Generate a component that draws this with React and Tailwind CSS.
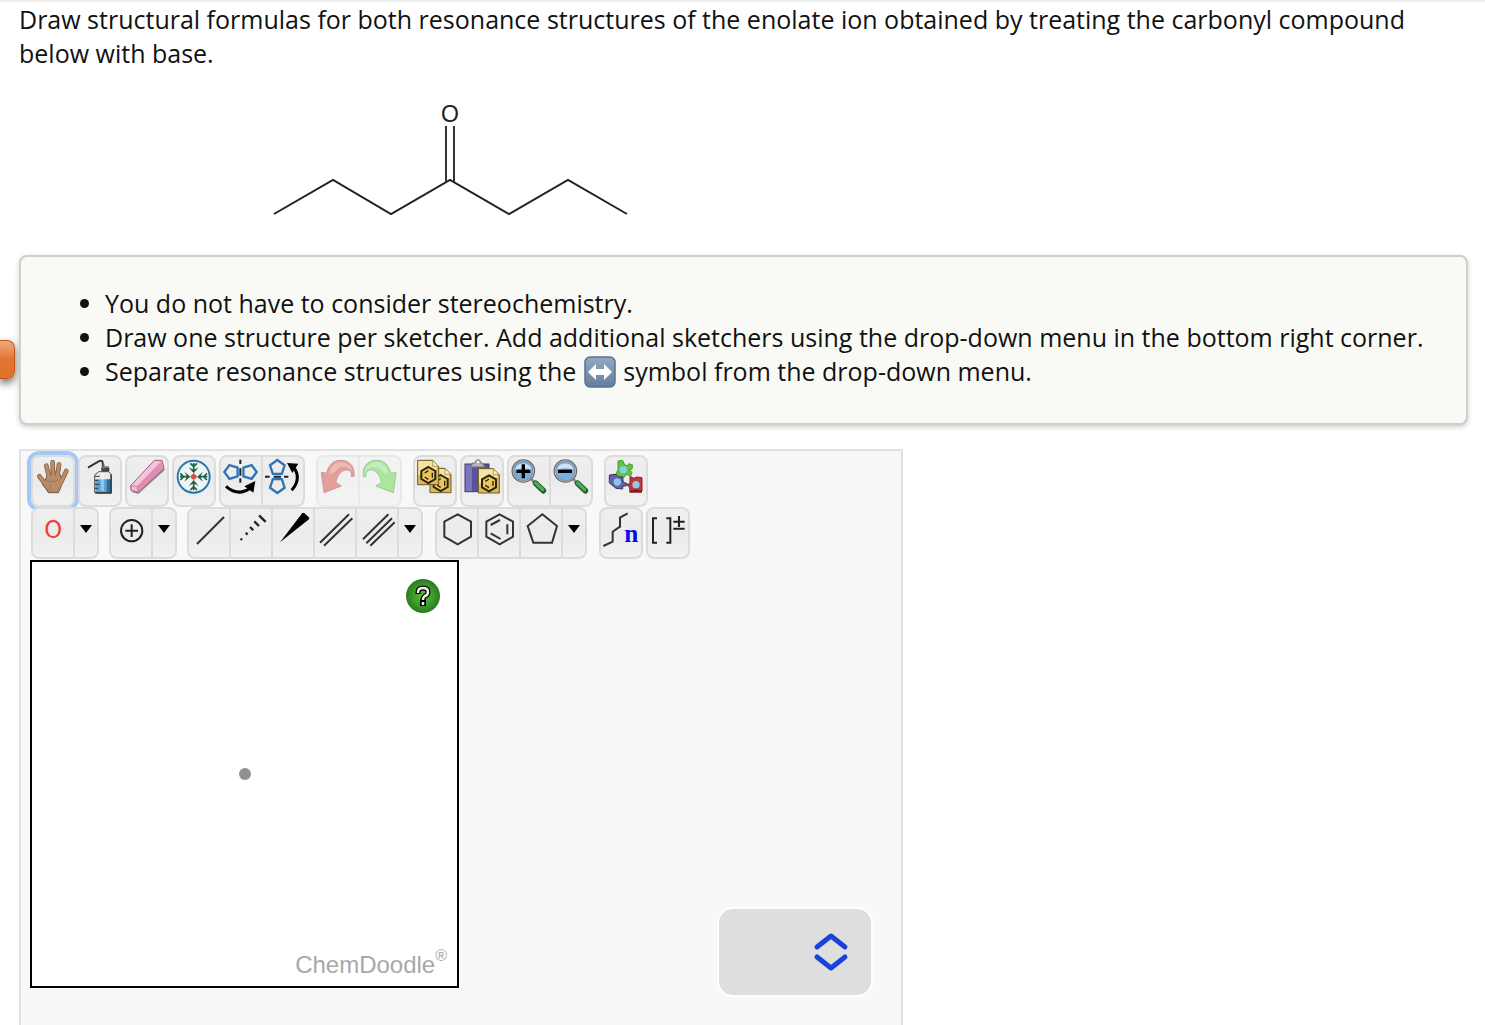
const pentagon = (cx, cy, r, turn) =>
  [0, 1, 2, 3, 4]
    .map(i => {
      const a = ((turn + i * 72) * Math.PI) / 180;
      return `${cx + r * Math.sin(a)},${cy - r * Math.cos(a)}`;
    })
    .join(' ');

function Icon({ children }) {
  return (
    <svg viewBox="0 0 108 108" className="w-9 h-9 shrink-0 overflow-visible" fill="none" aria-hidden="true">
      {children}
    </svg>
  );
}

/* ═══ TOP ROW ICONS ═══ */
function HandIcon() {
  const fingers = 'M13 52 L38 84 M34 20 L44 62 M53 10 L54 62 M72 17 L66 62 M94 36 L76 74';
  return (
    <Icon>
      <path d={fingers} stroke="#7a563d" strokeWidth="14" strokeLinecap="round" />
      <path d="M30 66 L38 44 H74 L82 66 Q80 84 70 101 H40 Q34 90 22 76 Z" fill="#a87a56" stroke="#7a563d" strokeWidth="3" />
      <path d={fingers} stroke="#b98c68" strokeWidth="10" strokeLinecap="round" />
      <path d="M36 50 H74 L79 74 Q76 86 68 98 H43 Q38 86 32 76 Z" fill="#b98c68" />
      <path d="M38 66 Q54 72 72 62 M42 72 Q50 84 46 94 M49 34 V52 M61 34 V52" stroke="#96704f" strokeWidth="2.5" />
    </Icon>
  );
}

function PumpIcon() {
  return (
    <Icon>
      <path d="M18 26 L50 7 Q62 2 62 12 L64 28" stroke="#333" strokeWidth="6" />
      <rect x="58" y="25" width="24" height="14" rx="3" fill="#444" />
      <path d="M58 24 H81 M66 16 V30" stroke="#777" strokeWidth="4" />
      <path d="M38 48 L50 38 H80 L88 46 V101 H38 Z" fill="#e6eaec" stroke="#555" strokeWidth="3" />
      <path d="M40 61 H87 V100 H40 Z" fill="#5aa3da" />
      <path d="M74 61 H87 V100 H74 Z" fill="#2d6da1" />
      <path d="M56 42 H66 V96 H56 Z" fill="#fff" opacity=".35" />
      <path d="M39 52 H53 M39 64 H49 M39 76 H53 M39 88 H49" stroke="#333" strokeWidth="3" />
      <path d="M87 46 V102 H40" stroke="#333" strokeWidth="4" />
    </Icon>
  );
}

function EraserIcon() {
  return (
    <Icon>
      <path d="M8 99 L28 105 L107 34 L104 22 Z" fill="#444" opacity=".55" />
      <path d="M5 80 L76 4 L99 4 L105 28 L26 101 L6 94 Z" fill="#f0a9cb" stroke="#a9597f" strokeWidth="3" strokeLinejoin="round" />
      <path d="M22 84 L96 9 L103 28 L27 99 Z" fill="#dd8eb5" />
      <path d="M8 79 L77 7 L94 8 L24 80 Z" fill="#f7c4dc" />
      <path d="M6 81 L24 82 L27 99 L8 93 Z" fill="#f7bdd6" stroke="#b9708f" strokeWidth="2" />
    </Icon>
  );
}

function CenterIcon() {
  return (
    <Icon>
      <circle cx="53" cy="53" r="48" fill="#eef5f5" stroke="#2b74aa" strokeWidth="6" />
      {[0, 90, 180, 270].map(a => (
        <g key={a} transform={`rotate(${a} 53 53)`}>
          <path d="M53 12 V34 M43 13 L53 23 L63 13" stroke="#245f43" strokeWidth="5" />
          <path d="M38 25 L53 43 L68 25 L57 31 H49 Z" fill="#245f43" />
        </g>
      ))}
      <path d="M53 39 V67 M39 53 H67" stroke="#6b8f78" strokeWidth="3" />
      <circle cx="53" cy="53" r="8" fill="#d64b45" />
    </Icon>
  );
}

function FlipHorizontalIcon() {
  return (
    <Icon>
      <polygon points={pentagon(26, 39, 22, -90)} stroke="#2f75b5" strokeWidth="7" />
      <polygon points={pentagon(79, 39, 22, 90)} stroke="#2f75b5" strokeWidth="7" />
      <path d="M52 2 V15 M52 28 V50 M52 58 V71" stroke="#222" strokeWidth="6" />
      <path d="M9 82 Q46 114 82 87" stroke="#000" strokeWidth="9" />
      <path d="M64 82 L97 66 L91 101 Z" fill="#000" />
    </Icon>
  );
}

function FlipVerticalIcon() {
  return (
    <Icon>
      <polygon points={pentagon(37, 26, 23, 0)} stroke="#2f75b5" strokeWidth="7" />
      <polygon points={pentagon(37, 79, 23, 180)} stroke="#2f75b5" strokeWidth="7" />
      <path d="M0 53 H14 M26 53 H48 M57 53 H70" stroke="#222" strokeWidth="6" />
      <path d="M80 94 Q110 60 87 26" stroke="#000" strokeWidth="9" />
      <path d="M66 12 L100 14 L82 42 Z" fill="#000" />
    </Icon>
  );
}

const TURN_ARROW =
  'M102 53 C106 15 80 -1 50 5 C34 10 24 24 20 43 L4 40 L12 101 L64 81 L48 71 C50 54 60 36 76 33 C90 31 96 40 94 52 Z';
const TURN_SHINE = 'M98 40 C94 14 70 6 52 11 C38 16 30 28 27 46 L44 40 C54 22 78 14 98 40 Z';

function UndoIcon() {
  return (
    <Icon>
      <path d={TURN_ARROW} fill="#d3483f" stroke="#8f433d" strokeWidth="3" strokeLinejoin="round" />
      <path d={TURN_SHINE} fill="#fff" opacity=".3" />
    </Icon>
  );
}

function RedoIcon() {
  return (
    <Icon>
      <g transform="matrix(-1 0 0 1 106 0)">
        <path d={TURN_ARROW} fill="#5fd845" stroke="#489440" strokeWidth="3" strokeLinejoin="round" />
        <path d={TURN_SHINE} fill="#fff" opacity=".3" />
      </g>
    </Icon>
  );
}

function MoleculePage({ x, y }) {
  return (
    <g transform={`translate(${x} ${y})`}>
      <path d="M1 1 H46 L64 20 V74 H1 Z" fill="#dfb957" stroke="#6d5a26" strokeWidth="3" />
      <path d="M3 3 H45 L58 22 V30 L3 46 Z" fill="#f7e3a0" />
      <path d="M46 1 V19 H64 Z" fill="#fbf0c8" stroke="#8b7537" strokeWidth="2" />
      <path d="M33 21 L54 33 V57 L33 69 L12 57 V33 Z" fill="#e9c65d" stroke="#292310" strokeWidth="6" />
      <path d="M22 39 L33 32 M45 38 V53 M22 51 L33 58" stroke="#292310" strokeWidth="4" />
    </g>
  );
}

function CopyIcon() {
  return (
    <Icon>
      <MoleculePage x={38} y={27} />
      <MoleculePage x={1} y={3} />
    </Icon>
  );
}

function PasteIcon() {
  return (
    <Icon>
      <rect x="3" y="15" width="72" height="83" fill="#5b529d" stroke="#3d3875" strokeWidth="3" />
      <path d="M5 17 H24 V96 H5 Z" fill="#7d75bd" />
      <path d="M20 24 L26 12 H34 Q34 2 42 2 Q50 2 50 12 H56 L62 24 Z" fill="#b5b5b5" stroke="#777" strokeWidth="3" />
      <circle cx="42" cy="9" r="4" fill="#f3f3f3" />
      <MoleculePage x={42} y={28} />
    </Icon>
  );
}

function ZoomIcon({ plus }) {
  return (
    <Icon>
      <path d="M60 60 L76 75" stroke="#8a8a8a" strokeWidth="9" />
      <path d="M74 73 L97 95" stroke="#1d6427" strokeWidth="17" strokeLinecap="round" />
      <path d="M74 72 L95 92" stroke="#4fab54" strokeWidth="10" strokeLinecap="round" />
      <circle cx="37" cy="36" r="32" fill="#79aee0" stroke="#666" strokeWidth="7" />
      <circle cx="37" cy="36" r="31" stroke="#b9bcc0" strokeWidth="3" />
      <path d="M12 32 A26 26 0 0 1 62 32 Q38 24 12 32 Z" fill="#cfe3f5" />
      <path d={plus ? 'M16 37 H58 M37 16 V58' : 'M15 37 H57'} stroke="#000" strokeWidth="10" />
    </Icon>
  );
}

function BlocksIcon() {
  return (
    <Icon>
      <path d="M30 6 L44 4 L50 18 L60 20 L62 14 L74 18 L72 30 L64 32 L72 40 L68 50 L54 46 L48 56 L22 48 L30 32 Z" fill="#5bc83c" stroke="#4a9a38" strokeWidth="3" />
      <path d="M4 48 L24 46 L30 54 L44 54 L46 70 L58 74 L56 80 L44 82 L44 90 L24 88 L4 72 Z" fill="#6661aa" stroke="#3b356e" strokeWidth="3" />
      <path d="M66 52 L78 58 L86 54 L102 56 L102 96 L84 92 L66 96 L64 84 L58 78 L66 72 Z" fill="#c4343a" stroke="#8d2327" strokeWidth="3" />
      <path d="M64 96 L84 92 L102 96 V101 H64 Z" fill="#7d1b1e" />
      <circle cx="46" cy="32" r="11" fill="#83cfe4" />
      <circle cx="28" cy="69" r="11" fill="#8cc4ea" />
      <circle cx="84" cy="77" r="11" fill="#8dcbe8" />
    </Icon>
  );
}

/* ═══ BOTTOM ROW ICONS ═══ */
function OxygenIcon() {
  return (
    <Icon>
      <text x="55" y="82" textAnchor="middle" fontSize="76" fill="#f23c36" fontFamily="'DejaVu Sans Condensed', 'DejaVu Sans', sans-serif">O</text>
    </Icon>
  );
}

function ChargeIcon() {
  return (
    <Icon>
      <circle cx="56" cy="59" r="32" stroke="#222" strokeWidth="6" />
      <path d="M37 59 H75 M56 40 V78" stroke="#222" strokeWidth="6" />
    </Icon>
  );
}

function LinesIcon({ d }) {
  return (
    <Icon>
      <path d={d} stroke="#333" strokeWidth="6" />
    </Icon>
  );
}

function RecessedBondIcon() {
  const marks = [[25, 85, 3], [41, 68, 4], [56, 53, 7], [71, 38, 10], [88, 23, 14]];
  return (
    <Icon>
      {marks.map(([x, y, r]) => (
        <path key={x} d={`M${x - r * 0.7} ${y - r * 0.7} L${x + r * 0.7} ${y + r * 0.7}`} stroke="#222" strokeWidth="7" />
      ))}
    </Icon>
  );
}

function WedgeIcon() {
  return (
    <Icon>
      <path d="M15 94 L82 6 L88 6 L103 20 L102 25 Z" fill="#000" />
    </Icon>
  );
}

function ChainIcon() {
  return (
    <Icon>
      <path d="M1 105 L29 92 V62 L51 47 V20 L74 7" stroke="#333" strokeWidth="6" />
      <text x="64" y="94" fontSize="76" fontWeight="bold" fill="#0a0af0" fontFamily="'Liberation Serif', serif">n</text>
    </Icon>
  );
}

function BracketIcon() {
  return (
    <Icon>
      <path d="M21 22 H9 V95 H21 M49 22 H61 V95 H49" stroke="#222" strokeWidth="6" />
      <path d="M70 32 H104 M87 15 V48 M70 53 H104" stroke="#222" strokeWidth="6" />
    </Icon>
  );
}

const topRow = [
  { gap: '', tools: [{ label: 'Move', icon: <HandIcon />, active: true }] },
  { gap: 'ml-[3px]', tools: [{ label: 'Clear', icon: <PumpIcon /> }] },
  { gap: 'ml-[3px]', tools: [{ label: 'Erase', icon: <EraserIcon /> }] },
  { gap: 'ml-[3px]', tools: [{ label: 'Center', icon: <CenterIcon /> }] },
  { gap: 'ml-[3px]', tools: [{ label: 'Flip horizontally', icon: <FlipHorizontalIcon /> }, { label: 'Flip vertically', icon: <FlipVerticalIcon /> }] },
  { gap: 'ml-[11px]', faded: true, tools: [{ label: 'Undo', icon: <UndoIcon /> }, { label: 'Redo', icon: <RedoIcon /> }] },
  { gap: 'ml-[11px]', tools: [{ label: 'Copy', icon: <CopyIcon /> }] },
  { gap: 'ml-[3px]', tools: [{ label: 'Paste', icon: <PasteIcon /> }] },
  { gap: 'ml-[3px]', tools: [{ label: 'Zoom in', icon: <ZoomIcon plus /> }, { label: 'Zoom out', icon: <ZoomIcon /> }] },
  { gap: 'ml-[11px]', tools: [{ label: 'Clean', icon: <BlocksIcon /> }] },
];

const bottomRow = [
  { gap: '', menu: 'More elements', tools: [{ label: 'Oxygen', icon: <OxygenIcon /> }] },
  { gap: 'ml-2.5', menu: 'More attributes', tools: [{ label: 'Increase charge', icon: <ChargeIcon /> }] },
  {
    gap: 'ml-2.5',
    menu: 'More bonds',
    tools: [
      { label: 'Single bond', icon: <LinesIcon d="M18 99 L99 18" /> },
      { label: 'Recessed bond', icon: <RecessedBondIcon /> },
      { label: 'Protruding bond', icon: <WedgeIcon /> },
      { label: 'Double bond', icon: <LinesIcon d="M9 95 L96 10 M21 104 L106 22" /> },
      { label: 'Triple bond', icon: <LinesIcon d="M12 85 L88 10 M22 97 L99 22 M34 104 L107 34" /> },
    ],
  },
  {
    gap: 'ml-3',
    menu: 'More rings',
    tools: [
      { label: 'Cyclohexane', icon: <LinesIcon d="M56 10 L96 32 V77 L56 100 L16 77 V32 Z" /> },
      { label: 'Benzene', icon: <LinesIcon d="M56 10 L96 32 V77 L56 100 L16 77 V32 Z M29 42 L57 27 M79 40 V70 M29 67 L59 84" /> },
      { label: 'Cyclopentane', icon: <LinesIcon d="M58 10 L102 45 L87 95 H31 L14 45 Z" /> },
    ],
  },
  { gap: 'ml-3', tools: [{ label: 'Carbon chain', icon: <ChainIcon /> }] },
  { gap: 'ml-[3px]', tools: [{ label: 'Repeat unit', icon: <BracketIcon /> }] },
];

function ToolGroup({ group }) {
  const active = group.tools[0].active;
  return (
    <div
      className={`flex h-[52px] shrink-0 rounded-lg border-2 border-[#dcdcdc] bg-linear-to-b from-[#efefef] via-[#ebebeb] to-[#f2f2f2] ${group.gap} ${
        group.faded ? 'opacity-50' : ''
      } ${active ? 'ring-4 ring-[#a3c8f8]' : ''}`}
    >
      {group.tools.map((t, i) => (
        <button
          key={t.label}
          aria-label={t.label}
          disabled={group.faded}
          className={`flex items-start justify-center pt-0.5 ${i > 0 ? 'w-[42px] border-l-2 border-[#dcdcdc]' : 'w-10'}`}
        >
          {t.icon}
        </button>
      ))}
      {group.menu && (
        <button aria-label={group.menu} className="w-6 border-l-2 border-[#dcdcdc] flex justify-center items-start pt-4">
          <svg viewBox="0 0 12 8" className="w-3 h-2" aria-hidden="true">
            <path d="M0 0 H12 L6 8 Z" fill="#000" />
          </svg>
        </button>
      )}
    </div>
  );
}

function Heptanone() {
  return (
    <svg viewBox="0 0 360 116" className="w-[360px] h-[116px] shrink-0 ml-[252px] mt-8" fill="none" role="img" aria-label="4-heptanone">
      <path d="M3 112 L62 78 L120 112 L179 78 L238 112 L297 78 L356 112" stroke="#222" strokeWidth="2" />
      <path d="M175 24 V80 M183 24 V80" stroke="#333" strokeWidth="2" />
      <text x="179" y="20" textAnchor="middle" fontSize="23" fill="#222" fontFamily="'Liberation Sans', Arial, sans-serif">O</text>
    </svg>
  );
}

function ArrowEmoji() {
  return (
    <svg viewBox="0 0 32 32" className="inline-block w-8 h-8 mx-px -mt-1 align-middle" role="img" aria-label="left right arrow">
      <defs>
        <linearGradient id="emoji" x1="0" y1="0" x2="0" y2="1">
          <stop offset="0" stopColor="#92a9c2" />
          <stop offset="1" stopColor="#627e9e" />
        </linearGradient>
      </defs>
      <rect x="1" y="1" width="30" height="30" rx="5" fill="url(#emoji)" stroke="#58718e" strokeWidth="1.5" />
      <path d="M4 16 L12 8 V13 H20 V8 L28 16 L20 24 V19 H12 V24 Z" fill="#fff" />
    </svg>
  );
}

function Sketcher() {
  return (
    <div className="w-[429px] h-[428px] shrink-0 border-2 border-black bg-white flex flex-col justify-between pt-[17px] pb-1">
      <button aria-label="Help" className="self-end mr-[17px] w-[34px] h-[34px]">
        <svg viewBox="0 0 34 34" aria-hidden="true">
          <defs>
            <radialGradient id="help">
              <stop offset="0" stopColor="#56c936" />
              <stop offset="1" stopColor="#2b7a22" />
            </radialGradient>
          </defs>
          <circle cx="17" cy="17" r="17" fill="url(#help)" />
          <path d="M12 15 V13 Q12 9 17 9 Q22 9 22 13 Q22 16 19 17 Q17 18 17 21" stroke="#000" strokeWidth="5" fill="none" />
          <path d="M14 20 H20 V27 H14 Z" fill="#000" />
          <path d="M12 14 V13 Q12 9 17 9 Q22 9 22 13 Q22 16 19 17 Q17 18 17 21 M17 23 V26" stroke="#f0f0f0" strokeWidth="2.5" fill="none" />
        </svg>
      </button>
      <div className="self-center w-3 h-3 rounded-full bg-[#909090]" />
      <div className="self-end mr-2.5 pt-2 h-12 flex items-start text-[#a8a8a8] font-['Liberation_Sans',Arial,sans-serif]">
        <span className="text-[24px] leading-[46px]">ChemDoodle</span>
        <span className="text-base leading-7">®</span>
      </div>
    </div>
  );
}

export default function App() {
  return (
    <div className="relative h-screen overflow-hidden flex flex-col bg-white border-t-2 border-[#ececec] pl-[19px] pr-[17px] text-[#111] text-[25px] leading-[34px] font-['Open_Sans',sans-serif]">
      <p>
        Draw structural formulas for both resonance structures of the enolate ion obtained by treating the carbonyl compound below with base.
      </p>

      <Heptanone />

      {/* Side tab */}
      <div className="absolute left-0 top-[338px] w-[15px] h-[39px] rounded-r-lg border border-l-0 border-[#c9541d] bg-linear-to-b from-[#eeaa78] via-[#df7530] to-[#e0722a] shadow-[0_4px_8px_rgba(0,0,0,0.6)]" />

      {/* Instructions */}
      <div className="relative mt-[37px] shrink-0 rounded-lg border-2 border-[#cfcfcc] bg-[#f9faf5] pt-[29px] pb-[35px] pl-[84px] shadow-[0_2px_5px_rgba(0,0,0,0.2)]">
        <ul className="list-disc">
          <li>You do not have to consider stereochemistry.</li>
          <li>Draw one structure per sketcher. Add additional sketchers using the drop-down menu in the bottom right corner.</li>
          <li className="h-[34px]">
            Separate resonance structures using the <ArrowEmoji /> symbol from the drop-down menu.
          </li>
        </ul>
      </div>

      {/* Sketcher panel */}
      <div className="mt-6 grow shrink-0 w-full max-w-[884px] border-2 border-b-0 border-[#e2e2e2] bg-[#f8f8f8] pt-1 pl-[9px] pr-7">
        <div className="pl-px">
          <div className="flex">
            {topRow.map(g => <ToolGroup key={g.tools[0].label} group={g} />)}
          </div>
          <div className="flex">
            {bottomRow.map(g => <ToolGroup key={g.tools[0].label} group={g} />)}
          </div>
        </div>
        <div className="flex justify-between items-end mt-px">
          <Sketcher />
          <div className="relative -mb-[9px]">
            <select aria-label="Add sketcher" className="appearance-none block w-[156px] h-[90px] rounded-2xl border-2 border-white bg-[#dededf]">
              <option value=""></option>
              <option value="resonance">↔</option>
            </select>
            <svg viewBox="0 0 36 40" className="absolute right-6 top-[25px] w-9 h-10 pointer-events-none" fill="none" aria-hidden="true">
              <path d="M4 15 L18 4 L32 15 M4 25 L18 36 L32 25" stroke="#1a41da" strokeWidth="5" strokeLinecap="round" strokeLinejoin="round" />
            </svg>
          </div>
        </div>
      </div>
    </div>
  );
}
